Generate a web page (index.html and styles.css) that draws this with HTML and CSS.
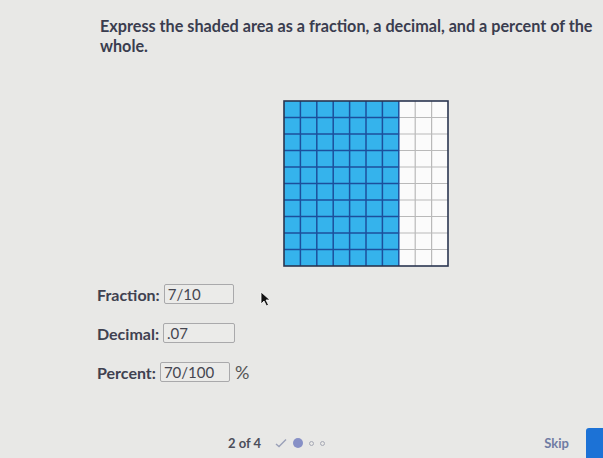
FILE: index.html
```html
<!DOCTYPE html>
<html lang="en">
<head>
    <meta charset="UTF-8">
    <title>Shaded Area</title>
    <link rel="stylesheet" href="styles.css">
</head>
<body>
    <div class="page">
        <div class="question">
            <p class="prompt">Express the shaded area as a fraction, a decimal, and a percent of the whole.</p>
        </div>

        <div class="figure">
            <svg id="grid" width="166" height="167" viewBox="0 0 166 167"></svg>
        </div>

        <div class="answers">
            <div class="answer-row">
                <label>Fraction:</label>
                <div class="answer-box w-fraction">7/10</div>
                <svg class="cursor" width="12" height="16" viewBox="0 0 12 16">
                    <path d="M1 1 L1 13 L4 10 L6.5 15 L8.5 14 L6 9 L10 9 Z" fill="#111" stroke="#fff" stroke-width="0.8"/>
                </svg>
            </div>
            <div class="answer-row">
                <label>Decimal:</label>
                <div class="answer-box w-decimal">.07</div>
            </div>
            <div class="answer-row">
                <label>Percent:</label>
                <div class="answer-box w-percent">70/100</div>
                <span class="unit">%</span>
            </div>
        </div>

        <div class="footer">
            <span class="counter">2 of 4</span>
            <div class="progress">
                <svg width="12" height="10" viewBox="0 0 12 10"><path d="M1 6 L4 8.5 L11 1.5" fill="none" stroke="#9aa0b8" stroke-width="1.4"/></svg>
                <span class="dot current"></span>
                <span class="dot"></span>
                <span class="dot"></span>
            </div>
            <span class="skip">Skip</span>
            <div class="next-btn"></div>
        </div>
    </div>

    <script>
        // build the 10x10 hundred grid, first 7 columns shaded
        const svg = document.getElementById('grid');
        const ns = 'http://www.w3.org/2000/svg';
        const cols = 10, rows = 10, shaded = 7;
        const x0 = 1, y0 = 1, w = 164, h = 165;
        const cw = w / cols, ch = h / rows;

        function el(name, attrs) {
            const e = document.createElementNS(ns, name);
            for (const k in attrs) e.setAttribute(k, attrs[k]);
            svg.appendChild(e);
            return e;
        }

        el('rect', {x: x0, y: y0, width: w, height: h, fill: '#fbfbfb'});
        el('rect', {x: x0, y: y0, width: cw * shaded, height: h, fill: '#35b3ec'});

        // light lines in the white part
        for (let i = shaded + 1; i < cols; i++) {
            el('line', {x1: x0 + i * cw, y1: y0, x2: x0 + i * cw, y2: y0 + h, stroke: '#b9b9b9', 'stroke-width': 1.2});
        }
        for (let j = 1; j < rows; j++) {
            el('line', {x1: x0 + shaded * cw, y1: y0 + j * ch, x2: x0 + w, y2: y0 + j * ch, stroke: '#b9b9b9', 'stroke-width': 1.2});
        }
        // dark lines in the shaded part
        for (let i = 1; i <= shaded; i++) {
            el('line', {x1: x0 + i * cw, y1: y0, x2: x0 + i * cw, y2: y0 + h, stroke: '#1c4f9c', 'stroke-width': 1.5});
        }
        for (let j = 1; j < rows; j++) {
            el('line', {x1: x0, y1: y0 + j * ch, x2: x0 + shaded * cw, y2: y0 + j * ch, stroke: '#1c4f9c', 'stroke-width': 1.5});
        }
        el('rect', {x: x0, y: y0, width: w, height: h, fill: 'none', stroke: '#2a3550', 'stroke-width': 1.6});
    </script>
</body>
</html>
```

FILE: styles.css
```css
* {
    margin: 0;
    padding: 0;
    box-sizing: border-box;
}

body {
    background-color: #e8e8e6;
    font-family: 'Lato', 'Open Sans', sans-serif;
    color: #3a3d4f;
    overflow: hidden;
}

.page {
    width: 603px;
    height: 458px;
    display: flex;
    flex-direction: column;
}

.question {
    padding: 16px 0 0 100px;
}

.prompt {
    width: 500px;
    font-size: 16.2px;
    font-weight: 700;
    line-height: 20px;
}

.figure {
    padding: 44px 0 0 283px;
    line-height: 0;
}

.answers {
    padding: 17px 0 0 97px;
    display: flex;
    flex-direction: column;
    gap: 19px;
}

.answer-row {
    display: flex;
    align-items: center;
    height: 20px;
    gap: 4px;
}

.answer-row label {
    font-size: 16px;
    font-weight: 700;
    color: #3f4150;
}

.answer-box {
    height: 20px;
    border: 1px solid #a9a9ab;
    border-radius: 2px;
    background: #ebebe9;
    font-size: 15px;
    line-height: 18px;
    padding-left: 3px;
    color: #454650;
}

.w-fraction { width: 70px; }
.w-decimal { width: 72px; }
.w-percent { width: 70px; }

.unit {
    font-size: 18px;
    color: #555;
    margin-left: 1px;
}

.cursor {
    margin-left: 22px;
    margin-top: 10px;
}

.footer {
    margin-top: auto;
    height: 30px;
    display: flex;
    align-items: center;
    padding-left: 228px;
}

.counter {
    font-size: 13px;
    font-weight: 700;
    color: #4c4e5a;
}

.progress {
    display: flex;
    align-items: center;
    gap: 6px;
    margin-left: 14px;
}

.dot {
    width: 5px;
    height: 5px;
    border-radius: 50%;
    border: 1px solid #a6a8b4;
}

.dot.current {
    width: 10px;
    height: 10px;
    border: none;
    background-color: #8790c6;
}

.skip {
    margin-left: auto;
    font-size: 13px;
    font-weight: 700;
    color: #6f7ca3;
    margin-right: 17px;
}

.next-btn {
    width: 17px;
    height: 30px;
    align-self: flex-end;
    background-color: #1c72d6;
    border-top-left-radius: 3px;
}
```
